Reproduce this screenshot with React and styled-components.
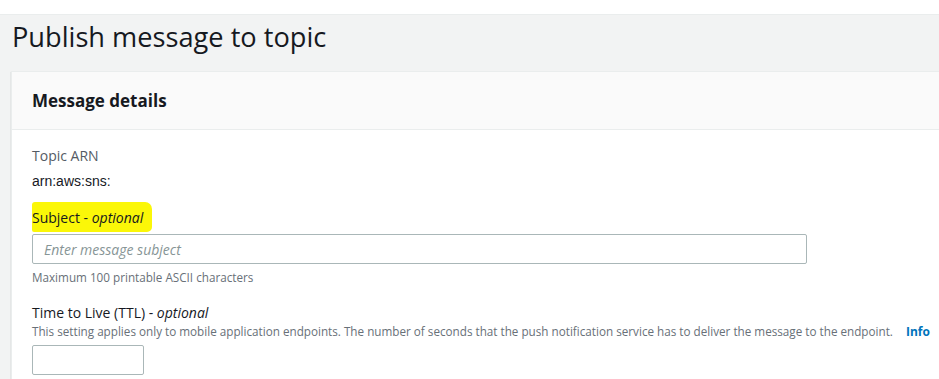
import React from "react";
import styled, { createGlobalStyle } from "styled-components";

const GlobalStyle = createGlobalStyle`
  html, body {
    margin: 0;
    padding: 0;
    background: #fff;
  }
  body {
    font-family: "Open Sans", "Noto Sans", Arial, sans-serif;
    color: #16191f;
    overflow: hidden;
  }
`;

const Page = styled.div`
  margin-top: 14px;
  background: #f2f3f3;
  border-top: 1px solid #eaeded;
  padding-left: 11px;
  height: 365px;
  overflow: hidden;
`;

const Title = styled.h1`
  margin: 0;
  padding: 5px 0 0 1px;
  height: 51px;
  font-size: 27.2px;
  font-weight: 400;
  line-height: 34px;
  color: #16191f;
`;

const Card = styled.section`
  width: 960px;
  background: #fff;
  border-left: 1px solid #eaeded;
  border-top: 1px solid #eaeded;
  box-shadow: 0 1px 1px 0 rgba(0, 28, 36, 0.3);
`;

const CardHeader = styled.header`
  display: flex;
  align-items: center;
  height: 57px;
  padding: 0 20px;
  background: #fafafa;
  border-bottom: 1px solid #eaeded;
`;

const CardTitle = styled.h2`
  margin: 0;
  font-size: 17px;
  font-weight: 700;
  line-height: 22px;
  color: #16191f;
`;

const CardBody = styled.div`
  display: flex;
  flex-direction: column;
  padding: 15px 20px 20px;
`;

const Field = styled.div`
  display: flex;
  flex-direction: column;
  margin-top: ${(p) => p.$gap || 0}px;
`;

const Label = styled.label`
  font-size: 14px;
  line-height: ${(p) => p.$lh || 22}px;
  color: ${(p) => (p.$muted ? "#545b64" : "#16191f")};

  em {
    font-style: italic;
  }
`;

const Highlight = styled.span`
  position: relative;
  align-self: flex-start;
  z-index: 0;

  &::before {
    content: "";
    position: absolute;
    left: 0;
    right: -9px;
    top: -5px;
    bottom: -3px;
    background: #fbf708;
    border-radius: 3px 7px 5px 2px;
    z-index: -1;
  }
`;

const Value = styled.div`
  margin-top: 3px;
  font-family: "Liberation Sans", Arial, sans-serif;
  font-size: 14px;
  line-height: 22px;
  color: #16191f;
`;

const Input = styled.input`
  box-sizing: border-box;
  width: ${(p) => p.$width}px;
  height: 30px;
  margin-top: ${(p) => p.$top || 5}px;
  padding: 4px 11px;
  border: 1px solid #aab7b8;
  border-radius: 2px;
  background: #fff;
  font-family: "Open Sans", Arial, sans-serif;
  font-size: 14px;
  color: #16191f;
  outline: none;

  &::placeholder {
    color: #879596;
    font-style: italic;
  }
`;

const Hint = styled.div`
  font-size: 11.7px;
  line-height: ${(p) => p.$lh || 18}px;
  margin-top: ${(p) => p.$top || 0}px;
  color: #687078;
  white-space: nowrap;
`;

const InfoLink = styled.a`
  margin-left: 13px;
  font-size: 12px;
  font-weight: 700;
  color: #0073bb;
  text-decoration: none;
`;

export default function App() {
  return (
    <>
      <GlobalStyle />
      <Page>
        <Title>Publish message to topic</Title>
        <Card>
          <CardHeader>
            <CardTitle>Message details</CardTitle>
          </CardHeader>
          <CardBody>
            <Field>
              <Label $muted>Topic ARN</Label>
              <Value>arn:aws:sns:</Value>
            </Field>
            <Field $gap={15}>
              <Label as={Highlight}>
                Subject - <em>optional</em>
              </Label>
              <Input $width={775} placeholder="Enter message subject" />
              <Hint $top={4}>Maximum 100 printable ASCII characters</Hint>
            </Field>
            <Field $gap={17}>
              <Label $lh={20}>
                Time to Live (TTL) - <em>optional</em>
              </Label>
              <Hint $lh={16}>
                This setting applies only to mobile application endpoints. The
                number of seconds that the push notification service has to
                deliver the message to the endpoint.
                <InfoLink href="#">Info</InfoLink>
              </Hint>
              <Input $width={112} $top={5} />
            </Field>
          </CardBody>
        </Card>
      </Page>
    </>
  );
}
